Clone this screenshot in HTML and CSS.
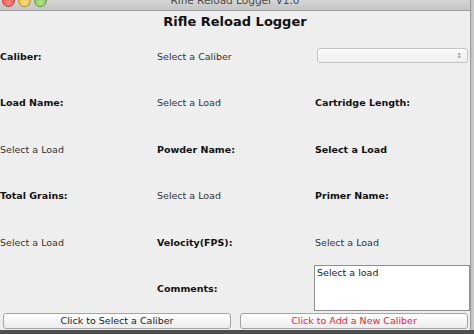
FILE: index.html
```html
<!DOCTYPE html>
<html>
<head>
<meta charset="utf-8">
<link rel="stylesheet" href="styles.css">
</head>
<body>
<div class="screen">
  <div class="window">
    <div class="titlebar">
      <div class="lights">
        <span class="light red"></span>
        <span class="light yellow"></span>
        <span class="light green"></span>
      </div>
      <div class="wintitle">Rifle Reload Logger V1.0</div>
    </div>
    <div class="content">
      <h1 class="title">Rifle Reload Logger</h1>
      <div class="grid">
        <div class="cell label">Caliber:</div>
        <div class="cell value">Select a Caliber</div>
        <div class="cell"><div class="combo"><span class="arrows">&#x2195;</span></div></div>

        <div class="cell label">Load Name:</div>
        <div class="cell value">Select a Load</div>
        <div class="cell label">Cartridge Length:</div>

        <div class="cell value">Select a Load</div>
        <div class="cell label">Powder Name:</div>
        <div class="cell label">Select a Load</div>

        <div class="cell label">Total Grains:</div>
        <div class="cell value">Select a Load</div>
        <div class="cell label">Primer Name:</div>

        <div class="cell value">Select a Load</div>
        <div class="cell label">Velocity(FPS):</div>
        <div class="cell value">Select a Load</div>

        <div class="cell"></div>
        <div class="cell label">Comments:</div>
        <div class="cell textcell"><div class="textarea">Select a load</div></div>
      </div>
      <div class="buttons">
        <div class="btn">Click to Select a Caliber</div>
        <div class="btn red">Click to Add a New Caliber</div>
      </div>
    </div>
  </div>
  <div class="rightedge"></div>
</div>
<div class="bottombar"></div>
</body>
</html>
```

FILE: styles.css
```css
html, body {
  margin: 0;
  padding: 0;
}
body {
  width: 474px;
  height: 334px;
  overflow: hidden;
  background: #c6c6c6;
  font-family: "DejaVu Sans", Verdana, sans-serif;
}
.screen {
  display: flex;
  height: 330px;
}
.window {
  width: 470px;
  display: flex;
  flex-direction: column;
  background: #eeeeee;
  border-right: 1px solid #9a9a9a;
}
.rightedge {
  flex: 1;
  background: linear-gradient(to right, #bdbdbd, #d0d0d0);
}
.titlebar {
  height: 10px;
  position: relative;
  overflow: hidden;
  background: linear-gradient(#d6d6d6, #c4c4c4);
  border-bottom: 1px solid #9e9e9e;
}
.lights {
  display: flex;
  gap: 3px;
  padding-left: 2px;
  margin-top: -6px;
}
.light {
  width: 11px;
  height: 11px;
  border-radius: 50%;
  border: 1px solid rgba(0,0,0,0.25);
}
.light.red { background: radial-gradient(circle at 50% 70%, #ff8a80, #e0443a); }
.light.yellow { background: radial-gradient(circle at 50% 70%, #ffe08a, #e0a52c); }
.light.green { background: radial-gradient(circle at 50% 70%, #b9e58a, #6cb743); }
.wintitle {
  position: absolute;
  left: 0;
  right: 0;
  top: -6px;
  text-align: center;
  font-size: 10.5px;
  color: #4a4a4a;
}
.content {
  flex: 1;
  display: flex;
  flex-direction: column;
}
.title {
  margin: 0;
  height: 22px;
  font-size: 13px;
  font-weight: bold;
  text-align: center;
  line-height: 22px;
  color: #111;
}
.grid {
  display: grid;
  grid-template-columns: 157px 158px 155px;
  grid-template-rows: repeat(6, 46.5px);
}
.cell {
  display: flex;
  align-items: center;
  font-size: 9.5px;
  white-space: nowrap;
}
.label {
  font-weight: bold;
  color: #111;
}
.value {
  color: #333;
}
.combo {
  margin-left: 2px;
  width: 149px;
  height: 13px;
  border: 1px solid #c4c4c4;
  border-radius: 3px;
  background: linear-gradient(#fafafa, #efefef);
  display: flex;
  justify-content: flex-end;
  align-items: center;
  margin-top: -1px;
}
.arrows {
  font-size: 7px;
  color: #888;
  padding-right: 5px;
}
.textcell {
  align-items: flex-end;
}
.textarea {
  margin-left: -1px;
  border: 1px solid #8e8e8e;
  background: #fff;
  color: #222;
  font-size: 9.5px;
  padding: 1px 2px;
  box-sizing: border-box;
  width: 156px;
  height: 46px;
  margin-bottom: 1px;
}
.buttons {
  display: flex;
  gap: 9px;
  padding-left: 3px;
  margin-top: 1px;
}
.btn {
  width: 226px;
  height: 14px;
  border: 1px solid #a4a4a4;
  border-radius: 3px;
  background: linear-gradient(#ffffff, #ececec);
  text-align: center;
  font-size: 9.5px;
  line-height: 14px;
  color: #222;
}
.btn.red {
  color: #e8243c;
}
.bottombar {
  height: 4px;
  background: #4e4e4e;
}
```
